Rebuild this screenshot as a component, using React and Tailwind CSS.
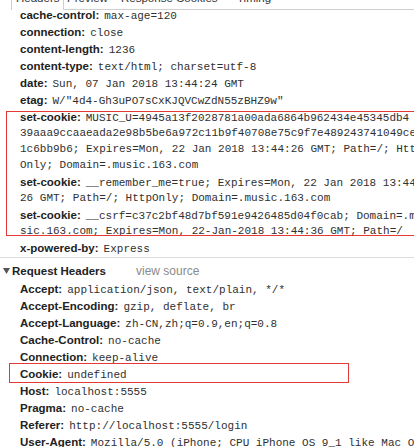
import React from "react";

const sans = { fontFamily: '"Liberation Sans", Arial, sans-serif' };

const responseHeaders = [
  { name: "cache-control", lines: ["max-age=120"] },
  { name: "connection", lines: ["close"] },
  { name: "content-length", lines: ["1236"] },
  { name: "content-type", lines: ["text/html; charset=utf-8"] },
  { name: "date", lines: ["Sun, 07 Jan 2018 13:44:24 GMT"] },
  { name: "etag", lines: ['W/"4d4-Gh3uPO7sCxKJQVCwZdN55zBHZ9w"'] },
  {
    name: "set-cookie",
    lines: [
      "MUSIC_U=4945a13f2028781a00ada6864b962434e45345db4",
      "39aaa9ccaaeada2e98b5be6a972c11b9f40708e75c9f7e489243741049ce",
      "1c6bb9b6; Expires=Mon, 22 Jan 2018 13:44:26 GMT; Path=/; Http",
      "Only; Domain=.music.163.com",
    ],
  },
  {
    name: "set-cookie",
    lines: [
      "__remember_me=true; Expires=Mon, 22 Jan 2018 13:44:",
      "26 GMT; Path=/; HttpOnly; Domain=.music.163.com",
    ],
  },
  {
    name: "set-cookie",
    lines: [
      "__csrf=c37c2bf48d7bf591e9426485d04f0cab; Domain=.mu",
      "sic.163.com; Expires=Mon, 22-Jan-2018 13:44:36 GMT; Path=/",
    ],
  },
  { name: "x-powered-by", lines: ["Express"] },
];

const requestHeaders = [
  { name: "Accept", value: "application/json, text/plain, */*" },
  { name: "Accept-Encoding", value: "gzip, deflate, br" },
  { name: "Accept-Language", value: "zh-CN,zh;q=0.9,en;q=0.8" },
  { name: "Cache-Control", value: "no-cache" },
  { name: "Connection", value: "keep-alive" },
  { name: "Cookie", value: "undefined" },
  { name: "Host", value: "localhost:5555" },
  { name: "Pragma", value: "no-cache" },
  { name: "Referer", value: "http://localhost:5555/login" },
  {
    name: "User-Agent",
    value: "Mozilla/5.0 (iPhone; CPU iPhone OS 9_1 like Mac OS X) AppleWebKit/601.1.46",
  },
];

const mono = "font-['Liberation_Mono',monospace] text-[11px] text-[#303030]";

function HeaderLine({ name, value }) {
  return (
    <div className="flex h-[17px] items-baseline whitespace-nowrap pt-px leading-[16px]">
      <span className="text-[11.5px] font-bold text-[#222]" style={sans}>
        {name}:
      </span>
      <span className={`ml-[5px] ${mono}`}>{value}</span>
    </div>
  );
}

function Tabs() {
  const tabs = ["Preview", "Response", "Cookies", "Timing"];
  const widths = ["w-[54px]", "w-[55px]", "w-[61px]", "w-[40px]"];
  return (
    <div className="flex h-[10px] overflow-hidden text-[11.5px] text-[#333]" style={sans}>
      <div className="w-[11px] shrink-0" />
      <div className="w-[53px] shrink-0 overflow-hidden border-x border-[#cfcfcf] bg-white">
        <div className="-mt-[10px] pl-[4px] leading-[16px]">Headers</div>
      </div>
      <div className="flex flex-1 overflow-hidden border-b border-[#cfcfcf]">
        {tabs.map((t, i) => (
          <div key={t} className={`${widths[i]} shrink-0 pl-[3px]`}>
            <div className="-mt-[10px] leading-[16px]">{t}</div>
          </div>
        ))}
      </div>
    </div>
  );
}

export default function App() {
  return (
    <div className="relative h-[447px] w-[414px] overflow-hidden bg-white">
      <Tabs />

      <div className="-mt-[4px] pl-[20px]">
        {responseHeaders.map((h, i) => (
          <div key={i}>
            <HeaderLine name={h.name} value={h.lines[0]} />
            {h.lines.slice(1).map((l, j) => (
              <div key={j} className={`h-[16px] leading-[16px] whitespace-nowrap ${mono}`}>
                {l}
              </div>
            ))}
          </div>
        ))}
      </div>

      <div className="mt-px border-t border-[#dedede]" />

      <div className="mt-[5px] flex h-[16px] items-center leading-[16px]" style={sans}>
        <svg width="7" height="6" viewBox="0 0 7 6" className="ml-[3px] mr-[2px]">
          <polygon points="0,0 7,0 3.5,6" fill="#555" />
        </svg>
        <span className="text-[11.5px] font-bold text-[#222]">Request Headers</span>
        <span className="ml-[30px] text-[12px] text-[#8a8a8a]">view source</span>
      </div>

      <div className="mt-[1px] pl-[20px]">
        {requestHeaders.map((h) => (
          <HeaderLine key={h.name} name={h.name} value={h.value} />
        ))}
      </div>

      {/* annotation boxes */}
      <div className="absolute left-[6px] top-[111px] h-[125px] w-[430px] border-[1.5px] border-[#e53935]" />
      <div className="absolute left-[9px] top-[363px] h-[20px] w-[340px] border-[1.5px] border-[#e53935]" />
    </div>
  );
}
